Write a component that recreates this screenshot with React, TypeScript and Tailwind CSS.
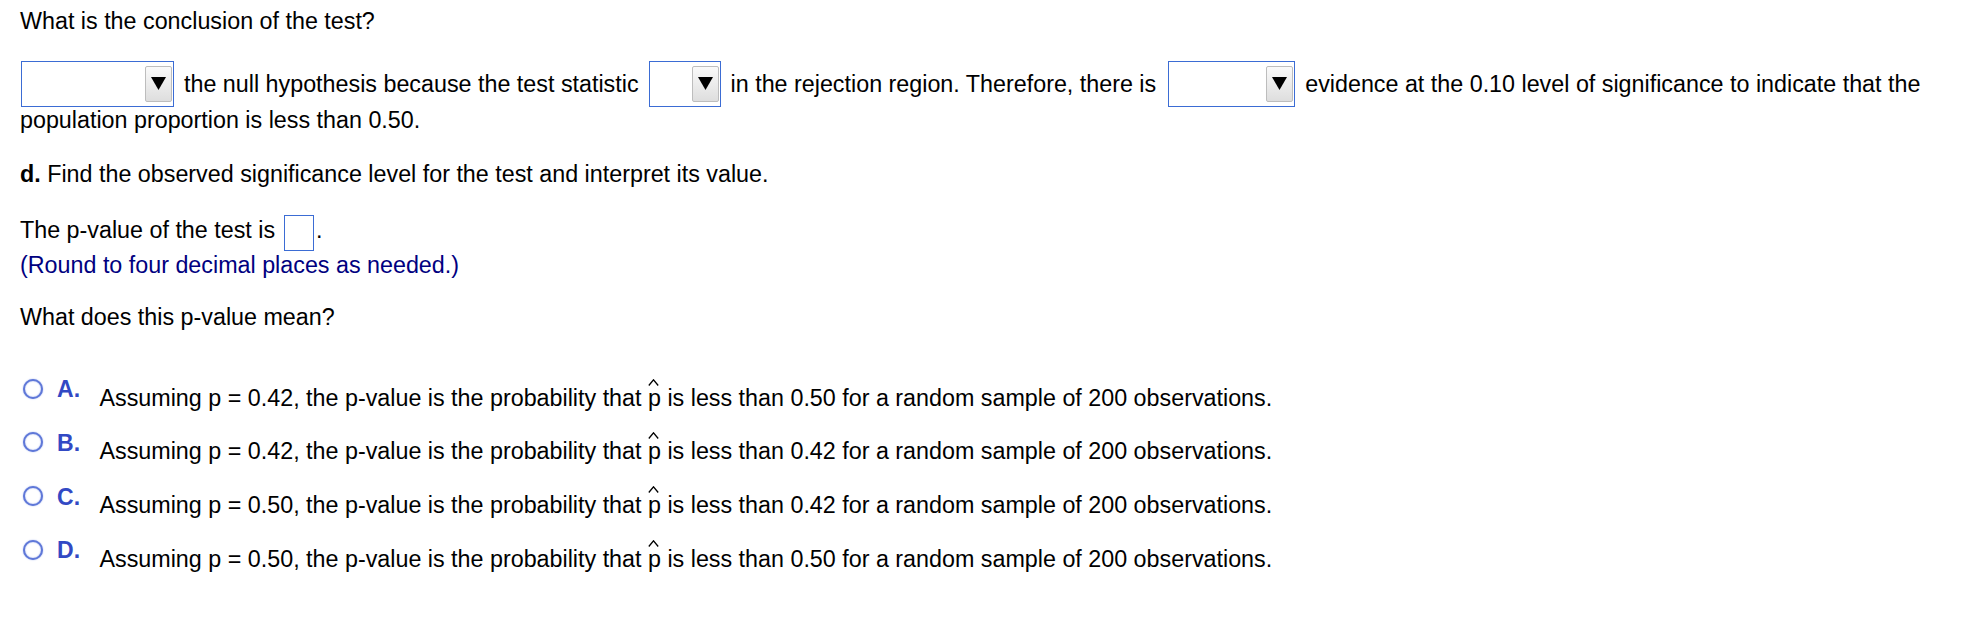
import React from "react";

function Dropdown({ className }: { className: string }) {
  return (
    <div
      className={
        "h-[46px] border border-[#3b6cd4] bg-white flex items-center justify-end pr-[1px] shrink-0 " +
        className
      }
    >
      <div className="w-[27px] h-[36px] border border-[#bdbdbd] rounded-[2px] bg-linear-to-b from-[#fafafa] to-[#dedede] flex items-start justify-center pt-[10px]">
        <svg width="15" height="13" viewBox="0 0 15 13">
          <polygon points="0,0 15,0 7.5,13" fill="#000" />
        </svg>
      </div>
    </div>
  );
}

function PHat() {
  return (
    <span className="relative inline-block">
      <svg
        className="absolute left-[0px] top-[-2px]"
        width="11"
        height="7"
        viewBox="0 0 11 7"
      >
        <polyline
          points="0.8,6.5 5.5,0.8 10.2,6.5"
          fill="none"
          stroke="#000"
          strokeWidth="1.3"
        />
      </svg>
      p
    </span>
  );
}

const OPTIONS = [
  { l: "A", p: "0.42", c: "0.50" },
  { l: "B", p: "0.42", c: "0.42" },
  { l: "C", p: "0.50", c: "0.42" },
  { l: "D", p: "0.50", c: "0.50" },
];

export default function App() {
  return (
    <div className="w-full h-[618px] bg-white text-black font-['Liberation_Sans',Arial,Helvetica,sans-serif] text-[23.3px] leading-[35px] pl-[20px] pt-[4px]">
      <div className="h-[35px] whitespace-nowrap">What is the conclusion of the test?</div>

      <div className="mt-[22px] h-[46px] flex items-center whitespace-nowrap">
        <Dropdown className="ml-[1px] w-[153px]" />
        <span className="ml-[10px]">the null hypothesis because the test statistic</span>
        <Dropdown className="ml-[10px] w-[72px]" />
        <span className="ml-[10px]">in the rejection region. Therefore, there is</span>
        <Dropdown className="ml-[12px] w-[127px]" />
        <span className="ml-[10px]">evidence at the 0.10 level of significance to indicate that the</span>
      </div>
      <div className="-mt-[4.5px] h-[35px] whitespace-nowrap">population proportion is less than 0.50.</div>

      <div className="mt-[19.5px] h-[35px] whitespace-nowrap">
        <span className="font-bold">d.</span> Find the observed significance level for the test and interpret its value.
      </div>

      <div className="mt-[20.5px] h-[35px] flex items-start whitespace-nowrap">
        <span>The p-value of the test is</span>
        <span className="ml-[9px] mt-[2px] w-[30px] h-[36px] border border-[#3b6cd4] bg-white shrink-0" />
        <span className="ml-[2px]">.</span>
      </div>
      <div className="h-[35px] whitespace-nowrap text-[#000080]">(Round to four decimal places as needed.)</div>

      <div className="mt-[17px] h-[35px] whitespace-nowrap">What does this p-value mean?</div>

      <div className="mt-[44.5px] flex flex-col gap-[17.25px]">
        {OPTIONS.map((o) => (
          <div key={o.l} className="flex items-start whitespace-nowrap">
            <span className="ml-[3px] mt-[-0.5px] w-[20px] h-[20px] rounded-full border-[2.5px] border-[#5f78d8] bg-white shrink-0 shadow-[0_0_1.5px_#94a6e8,inset_0_0_1.5px_#94a6e8]" />
            <span className="ml-[14px] w-[22px] font-bold text-[23px] leading-[21px] text-[#3249c4]">
              {o.l}.
            </span>
            <span className="ml-[20.5px] mt-[1.5px]">
              Assuming p = {o.p}, the p-value is the probability that <PHat /> is less than {o.c} for a random sample of 200 observations.
            </span>
          </div>
        ))}
      </div>
    </div>
  );
}
